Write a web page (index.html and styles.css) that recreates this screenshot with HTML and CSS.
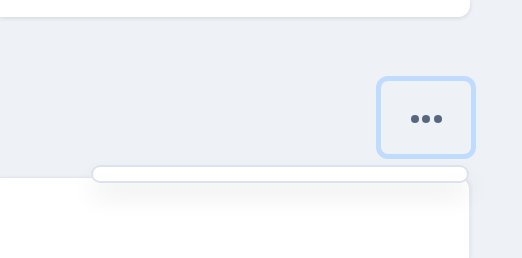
FILE: index.html
```html
<!DOCTYPE html>
<html>
<head>
    <meta charset="utf-8">
    <title>Panel</title>
    <link rel="stylesheet" href="styles.css">
</head>
<body>
    <div class="top-card"></div>

    <div class="toolbar">
        <button class="more-btn" aria-label="More">
            <span class="dot"></span><span class="dot"></span><span class="dot"></span>
        </button>
    </div>

    <div class="lower">
        <div class="search-pill"></div>
        <div class="main-card"></div>
    </div>
</body>
</html>
```

FILE: styles.css
```css
html, body {
    margin: 0;
    height: 100%;
}

body {
    background: #eef1f6;
    font-family: "Inter", "Liberation Sans", sans-serif;
    overflow: hidden;
    display: flex;
    flex-direction: column;
}

.top-card {
    width: 470px;
    height: 17px;
    background: #fff;
    border-radius: 0 0 12px 0;
    box-shadow: 0 1px 4px rgba(40, 55, 80, 0.14);
    flex-shrink: 0;
}

.toolbar {
    display: flex;
    justify-content: flex-end;
    padding-right: 46px;
    margin-top: 59px;
}

.more-btn {
    width: 100px;
    height: 83px;
    box-sizing: border-box;
    border: 5px solid #bfdbfd;
    border-radius: 12px;
    background: transparent;
    display: flex;
    align-items: center;
    justify-content: center;
    gap: 3.5px;
    padding: 2px 0 0;
}

.dot {
    width: 8px;
    height: 8px;
    border-radius: 50%;
    background: #586780;
}

.lower {
    position: relative;
    flex: 1;
    padding-top: 18px;
}

.search-pill {
    position: absolute;
    top: 6px;
    left: 91px;
    width: 378px;
    height: 18px;
    box-sizing: border-box;
    background: #fff;
    border: 2px solid #dde3ee;
    border-radius: 9px;
    box-shadow: 0 14px 26px rgba(0, 0, 0, 0.07);
    z-index: 2;
}

.main-card {
    width: 470px;
    height: 100%;
    box-sizing: border-box;
    background: #fff;
    border-right: 1px solid #e4e8ef;
    border-top: 1px solid #e2e6ee;
    border-radius: 0 12px 0 0;
    box-shadow: 1px 0 4px rgba(40, 55, 80, 0.06);
}
```
